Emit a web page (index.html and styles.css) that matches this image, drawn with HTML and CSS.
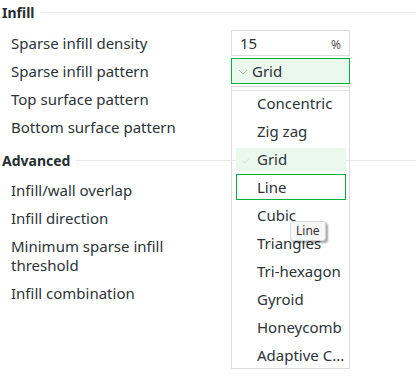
FILE: index.html
```html
<!DOCTYPE html>
<html lang="en">
<head>
    <meta charset="UTF-8">
    <title>Infill settings</title>
    <link rel="stylesheet" href="styles.css">
</head>
<body>
    <div class="panel">
        <div class="group-title"><span>Infill</span></div>
        <div class="row">
            <div class="label">Sparse infill density</div>
            <div class="input"><span>15</span><span class="unit">%</span></div>
        </div>
        <div class="row">
            <div class="label">Sparse infill pattern</div>
            <div class="select">
                <svg width="10" height="6" viewBox="0 0 10 6"><path d="M1 1l4 4 4-4" fill="none" stroke="#b8b8b8" stroke-width="1"/></svg>
                <span>Grid</span>
            </div>
        </div>
        <div class="row">
            <div class="label">Top surface pattern</div>
        </div>
        <div class="row">
            <div class="label">Bottom surface pattern</div>
        </div>

        <div class="group-title advanced"><span>Advanced</span></div>
        <div class="row">
            <div class="label">Infill/wall overlap</div>
        </div>
        <div class="row">
            <div class="label">Infill direction</div>
        </div>
        <div class="row tall">
            <div class="label">Minimum sparse infill<br>threshold</div>
        </div>
        <div class="row">
            <div class="label">Infill combination</div>
        </div>

        <div class="dropdown">
            <div class="item">Concentric</div>
            <div class="item">Zig zag</div>
            <div class="item selected">
                <svg class="check" width="9" height="7" viewBox="0 0 9 7"><path d="M1 3.5l2.5 2.5 5-5" fill="none" stroke="#cfe6d6" stroke-width="1"/></svg>
                Grid
            </div>
            <div class="item hover">Line</div>
            <div class="item">Cubic</div>
            <div class="item">Triangles</div>
            <div class="item">Tri-hexagon</div>
            <div class="item">Gyroid</div>
            <div class="item">Honeycomb</div>
            <div class="item">Adaptive C...</div>
        </div>
        <div class="tooltip">Line</div>
    </div>
</body>
</html>
```

FILE: styles.css
```css
body {
    margin: 0;
    background: #fff;
    font-family: "Noto Sans", sans-serif;
    font-size: 15px;
    color: #2b3336;
}
.panel {
    position: relative;
    width: 416px;
    height: 388px;
}
.group-title {
    display: flex;
    align-items: center;
    height: 24px;
    padding-left: 2px;
    margin-bottom: 5px;
    font-size: 14px;
    font-weight: bold;
    color: #262e30;
}
.group-title::after {
    content: "";
    flex: 1;
    height: 1px;
    margin-left: 6px;
    background: #e8e8e8;
}
.group-title.advanced {
    margin-top: 7px;
    margin-bottom: 4px;
}
.row {
    display: flex;
    align-items: center;
    height: 28px;
}
.row.tall {
    height: 47px;
}
.label {
    width: 220px;
    padding-left: 11px;
    line-height: 19px;
}
.input, .select {
    box-sizing: border-box;
    width: 119px;
    height: 26px;
    display: flex;
    align-items: center;
    border: 1px solid #dcdcdc;
}
.input {
    padding: 0 8px;
    justify-content: space-between;
}
.input .unit {
    font-size: 12px;
    color: #555;
    margin-top: 2px;
}
.select {
    border-color: #00ae42;
    background: #ebf8ee;
    padding-left: 6px;
}
.select svg {
    margin-right: 4px;
    margin-top: 1px;
}
.dropdown {
    position: absolute;
    left: 231px;
    top: 86px;
    box-sizing: border-box;
    width: 119px;
    height: 283px;
    padding: 2px 3px 0 4px;
    border: 1px solid #dcdcdc;
    box-shadow: inset 0 3px 0 #fff, inset 0 4px 0 #e6e6e6;
}
.item {
    position: relative;
    box-sizing: border-box;
    height: 28px;
    line-height: 28px;
    padding-left: 21px;
}
.item.selected {
    height: 23px;
    margin: 3px 0 2px;
    line-height: 23px;
    background: #ebf8ee;
}
.item.selected .check {
    position: absolute;
    left: 5px;
    top: 9px;
}
.item.hover {
    height: 26px;
    margin: 3px 0 1px;
    line-height: 24px;
    padding-left: 20px;
    border: 1px solid #00ae42;
}
.tooltip {
    position: absolute;
    left: 290px;
    top: 221px;
    padding: 0 5px;
    height: 18px;
    line-height: 18px;
    font-size: 12px;
    color: #333;
    background: #f7f7f7;
    border: 1px solid #d6d6d6;
    border-radius: 3px;
    box-shadow: 2px 2px 2px rgba(0, 0, 0, 0.35);
}
```
